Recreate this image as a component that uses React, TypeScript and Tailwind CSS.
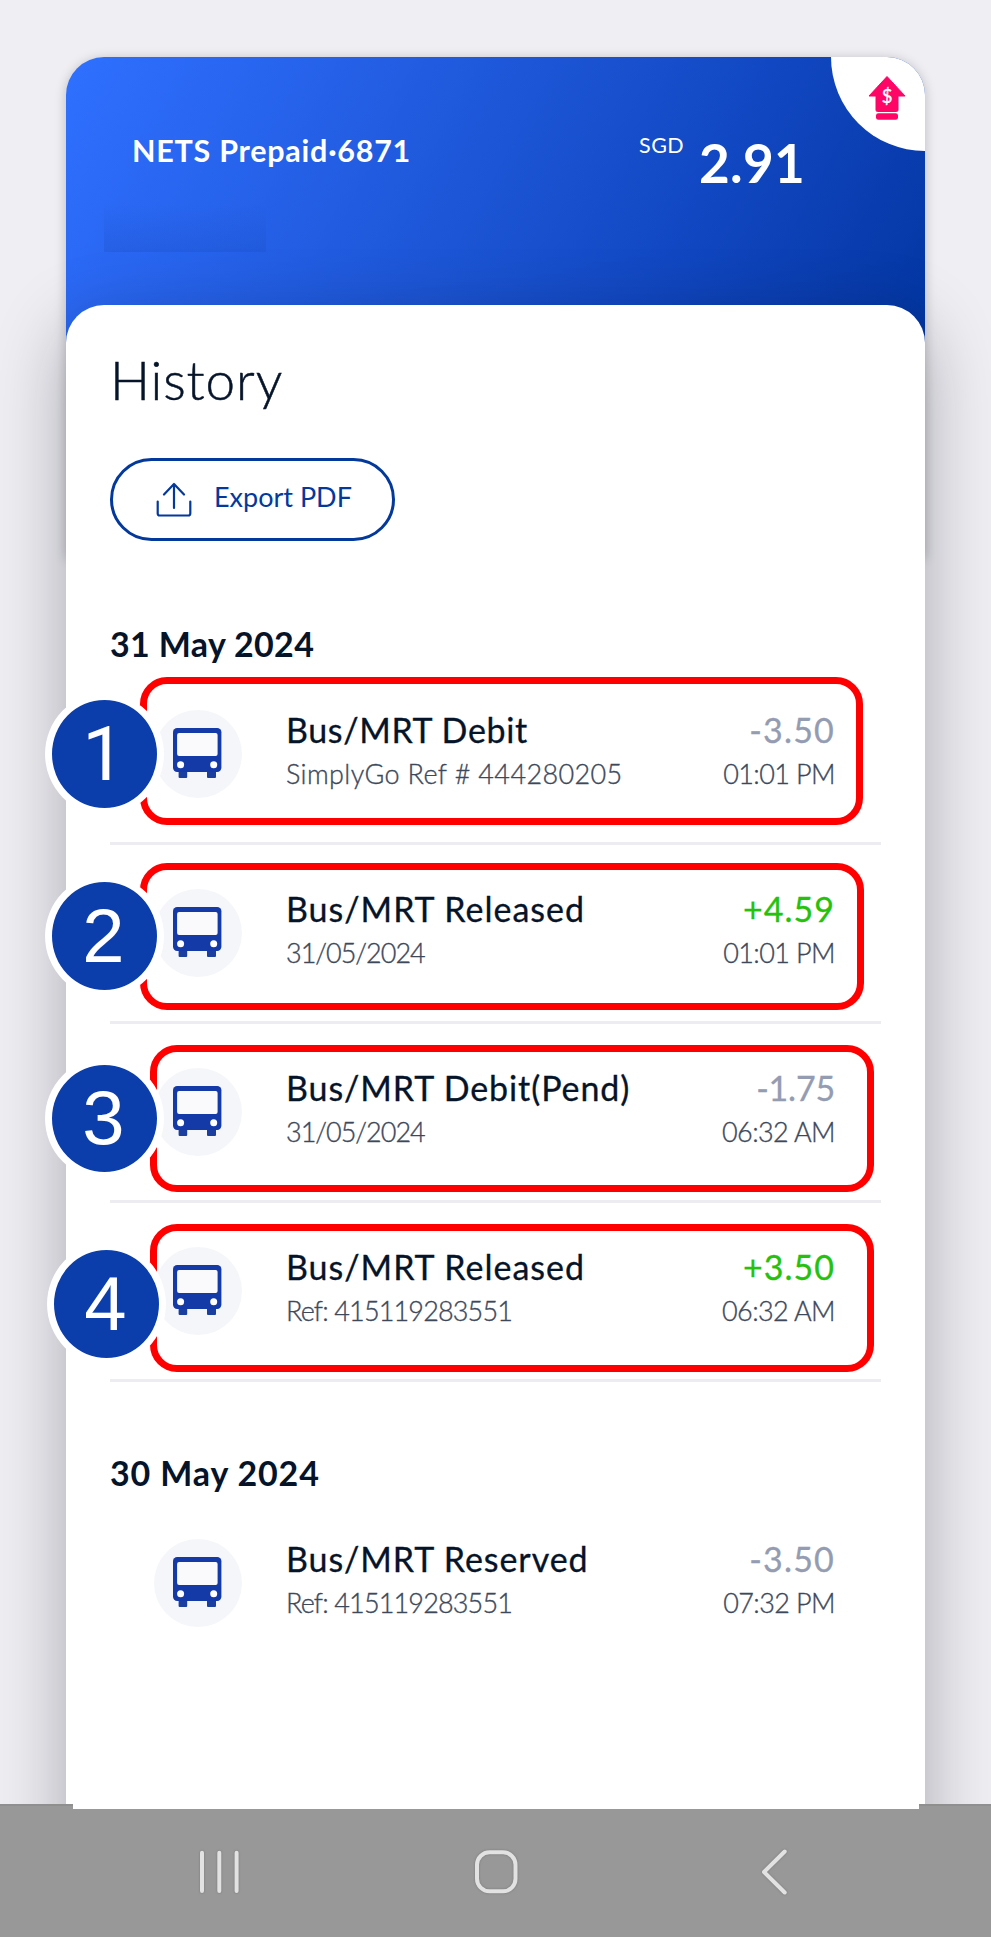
type Txn = {
  title: string;
  titleClass: string;
  sub: string;
  subClass: string;
  amount: string;
  amountClass: string;
  time: string;
  box?: string;
  badge?: string;
  badgeClass?: string;
};

const may31: Txn[] = [
  {
    title: "Bus/MRT Debit",
    titleClass: "tracking-[0.64px]",
    sub: "SimplyGo Ref # 444280205",
    subClass: "tracking-[0.36px]",
    amount: "-3.50",
    amountClass: "text-[#949cb2] tracking-[1.2px]",
    time: "01:01 PM",
    box: "left-[73.5px] top-[11.5px] h-[148px] w-[723px]",
    badge: "1",
    badgeClass: "left-[-21px] top-[27.5px] h-[122px] w-[119px] font-[Roboto]",
  },
  {
    title: "Bus/MRT Released",
    titleClass: "tracking-[0.98px]",
    sub: "31/05/2024",
    subClass: "tracking-[-1px]",
    amount: "+4.59",
    amountClass: "text-[#24c20c] tracking-[1px]",
    time: "01:01 PM",
    box: "left-[74px] top-[18.5px] h-[147px] w-[724px]",
    badge: "2",
    badgeClass: "left-[-21px] top-[30.5px] h-[122px] w-[119px] font-['Liberation_Sans']",
  },
  {
    title: "Bus/MRT Debit(Pend)",
    titleClass: "tracking-[0.9px]",
    sub: "31/05/2024",
    subClass: "tracking-[-1px]",
    amount: "-1.75",
    amountClass: "text-[#949cb2] tracking-[-0.2px]",
    time: "06:32 AM",
    box: "left-[84px] top-[21.5px] h-[147px] w-[724px]",
    badge: "3",
    badgeClass: "left-[-21px] top-[34.5px] h-[121px] w-[119px] font-['Liberation_Sans']",
  },
  {
    title: "Bus/MRT Released",
    titleClass: "tracking-[0.98px]",
    sub: "Ref: 415119283551",
    subClass: "tracking-[-0.85px]",
    amount: "+3.50",
    amountClass: "text-[#24c20c] tracking-[1px]",
    time: "06:32 AM",
    box: "left-[84px] top-[21.5px] h-[148px] w-[724px]",
    badge: "4",
    badgeClass: "left-[-19px] top-[40.5px] h-[122px] w-[119px] font-['Liberation_Sans']",
  },
];

const may30: Txn[] = [
  {
    title: "Bus/MRT Reserved",
    titleClass: "tracking-[0.92px]",
    sub: "Ref: 415119283551",
    subClass: "tracking-[-0.85px]",
    amount: "-3.50",
    amountClass: "text-[#949cb2] tracking-[1.2px]",
    time: "07:32 PM",
  },
];

function BusIcon() {
  return (
    <svg width="49" height="50" viewBox="0 0 49 50" className="-mt-px mr-[2px]">
      <rect x="5.6" y="41" width="8.6" height="9" rx="1" fill="#1a3f9f" />
      <rect x="34" y="41" width="9" height="9" rx="1" fill="#1a3f9f" />
      <rect x="0" y="0" width="48.4" height="44" rx="4.2" fill="#143aa8" />
      <rect x="4.1" y="5" width="40.5" height="23" rx="2" fill="#fafafd" />
      <circle cx="7.6" cy="36.7" r="3.5" fill="#fff" />
      <circle cx="40.7" cy="36.7" r="3.5" fill="#fff" />
    </svg>
  );
}

function Row({ t, divider }: { t: Txn; divider: boolean }) {
  return (
    <div className="relative h-[179px]">
      <div className={`mx-11 flex h-full items-start pr-[46px] pl-11 ${divider ? "border-b-[3px] border-[#ededf1]" : ""}`}>
        <div className="mt-[44px] flex size-[88px] shrink-0 items-center justify-center rounded-full bg-[#f5f6f9]">
          <BusIcon />
        </div>
        <div className="mt-[43px] ml-[44px] flex flex-1 flex-col gap-[6px] whitespace-nowrap">
          <div className={`text-[34px] leading-[42px] text-[#06142a] [-webkit-text-stroke:0.3px] ${t.titleClass}`}>{t.title}</div>
          <div className={`text-[27px] leading-[34px] font-light text-[#3d495b] [-webkit-text-stroke:0.35px] ${t.subClass}`}>{t.sub}</div>
        </div>
        <div className="mt-[43px] flex flex-col items-end gap-[6px] whitespace-nowrap">
          <div className={`text-[34px] leading-[42px] [-webkit-text-stroke:0.3px] ${t.amountClass}`}>{t.amount}</div>
          <div className="text-[27px] leading-[34px] font-light tracking-[-0.6px] text-[#3d495b] [-webkit-text-stroke:0.35px]">{t.time}</div>
        </div>
      </div>
      {t.box && <div className={`absolute rounded-[27px] border-[7px] border-[#ff0000] ${t.box}`} />}
      {t.badge && (
        <div className={`absolute flex items-center justify-center rounded-[50%] border-[7px] border-white bg-[#0b3eab] pr-[2px] pb-px text-[76px] leading-none text-white ${t.badgeClass}`}>
          {t.badge}
        </div>
      )}
    </div>
  );
}

export default function App() {
  return (
    <div className="flex h-[1937px] w-[991px] flex-col overflow-hidden bg-[#eeeef3] font-[Lato,sans-serif]">
      <div className="flex h-[1804px] shrink-0 flex-col px-[66px] pt-[57px]">
        <header className="relative h-[500px] w-[859px] shrink-0 overflow-hidden rounded-t-[38px] bg-[linear-gradient(118deg,#2f70ff_0%,#2865ef_20%,#1c55d5_48%,#1046c0_72%,#083bac_90%,#0236a2_100%)] bg-[length:859px_295px] bg-no-repeat shadow-[0_2px_12px_rgba(0,0,0,0.22)]">
          <div className="flex items-start justify-between pr-[120px] pl-[66px] whitespace-nowrap text-white">
            <div className="mt-[74px] text-[30.5px] leading-[38px] font-bold tracking-[0.75px]">NETS Prepaid·6871</div>
            <div className="flex items-start">
              <div className="mt-[75px] text-[21.5px] leading-[26px] tracking-[0.4px]">SGD</div>
              <div className="mt-[74px] ml-[15px] text-[53px] leading-[64px] font-bold tracking-[0.3px]">2.91</div>
            </div>
          </div>
          <div className="absolute top-[147px] left-[38px] h-[48px] w-[162px] bg-linear-to-b from-[#1c50c8]/0 to-[#1c50c8]/35" />
          <div className="absolute top-0 right-0 size-[94px] overflow-hidden rounded-tr-[42px] rounded-bl-full bg-white">
            <svg width="94" height="94" viewBox="831 57 94 94">
              <path d="M887 76.5 L905 96 H898 V110 a1.5 1.5 0 0 1 -1.5 1.5 H877.5 a1.5 1.5 0 0 1 -1.5 -1.5 V96 H869 Z" fill="#ff0566" stroke="#ff0566" strokeWidth="1" strokeLinejoin="round" />
              <rect x="876" y="113.2" width="22" height="6.6" rx="2.4" fill="#ff0566" />
              <text x="887" y="102.5" textAnchor="middle" fontFamily="Lato" fontWeight="400" fontSize="18.5" fill="#fff" stroke="#fff" strokeWidth="0.4">$</text>
            </svg>
          </div>
        </header>
        <main className="relative -mt-[252.5px] flex h-[1580px] w-[859px] shrink-0 flex-col rounded-t-[38px] bg-white shadow-[0_20px_72px_rgba(0,0,16,0.3)]">
          <h1 className="mt-[43px] ml-[44px] text-[53px] leading-[64px] font-light tracking-[0.9px] text-[#06142a] [-webkit-text-stroke:0.5px]">History</h1>
          <button className="mt-[46px] ml-[44px] flex h-[83px] w-[285px] items-center rounded-full border-[3px] border-[#03399b] pl-[43px] text-[#03399b]">
            <svg width="36" height="36" viewBox="0 0 36 36" fill="none" stroke="currentColor" strokeWidth="2.2" strokeLinecap="round" strokeLinejoin="round">
              <path d="M18 27 V3 M8 13.5 L18 3 L28 13.5 M1.7 20.5 V32.5 q0 2 2 2 H32.3 q2 0 2 -2 V20.5" />
            </svg>
            <span className="mb-[5px] ml-[22px] text-[27px] leading-[34px]">Export PDF</span>
          </button>
          <h2 className="mt-[82px] ml-[44px] h-[43px] text-[34px] leading-[42px] font-bold tracking-[0.35px] text-[#06142a]">31 May 2024</h2>
          <section>
            {may31.map((t, i) => (
              <Row key={i} t={t} divider />
            ))}
          </section>
          <h2 className="mt-[70px] ml-[44px] h-[43px] text-[34px] leading-[42px] font-bold tracking-[0.85px] text-[#06142a]">30 May 2024</h2>
          <section>
            {may30.map((t, i) => (
              <Row key={i} t={t} divider={false} />
            ))}
          </section>
        </main>
      </div>
      <nav className="relative flex h-[133px] shrink-0 flex-col items-center border-t-2 border-[#8f8f8f] bg-[#989898]">
        <div className="-mt-[2px] h-[5px] w-[846px] shrink-0 bg-white" />
        <div className="mt-[37px] flex w-full items-center pl-[197px]">
          <svg width="44" height="52" viewBox="198 1846 44 52" fill="none" stroke="#e2e2e2" strokeWidth="4" strokeLinecap="round" className="drop-shadow-[0_0_1px_#777]">
            <path d="M203 1852.8 V1891 M220.3 1852.8 V1891 M237.6 1852.8 V1891" />
          </svg>
          <svg width="52" height="52" viewBox="470 1846 52 52" fill="none" stroke="#e2e2e2" strokeWidth="4" className="ml-[228px] drop-shadow-[0_0_1px_#777]">
            <rect x="478" y="1852.3" width="38.5" height="39" rx="12.5" />
          </svg>
          <svg width="36" height="52" viewBox="757 1846 36 52" fill="none" stroke="#e2e2e2" strokeWidth="4" strokeLinecap="round" strokeLinejoin="round" className="ml-[235px] drop-shadow-[0_0_1px_#777]">
            <path d="M785.7 1851.5 L765 1872 L785.7 1892.5" />
          </svg>
        </div>
      </nav>
    </div>
  );
}
